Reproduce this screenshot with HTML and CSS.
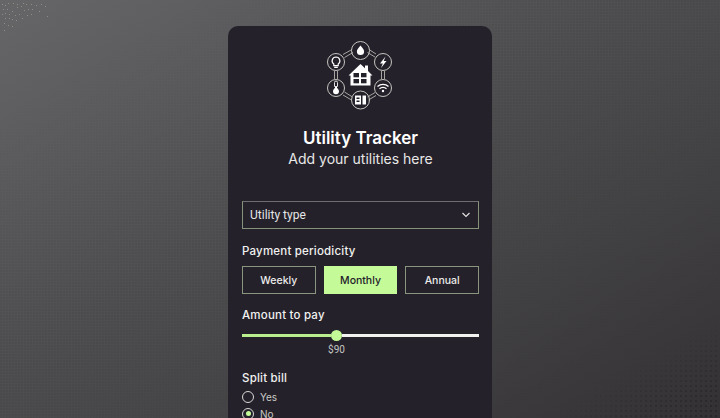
FILE: index.html
```html
<!DOCTYPE html>
<html lang="en">
<head>
<meta charset="utf-8">
<title>Utility Tracker</title>
<link rel="stylesheet" href="styles.css">
</head>
<body>
<svg class="sparkle" width="50" height="34" viewBox="0 0 50 34" aria-hidden="true">
  <path fill="#8f8e84" d="M2 4h1v1H2zM5 5h1v1H5zM8 3h1v1H8zM13 3h1v1h-1zM17 4h1v1h-1zM23 3h1v1h-1zM26 4h1v1h-1zM31 4h1v1h-1zM36 5h1v1h-1zM41 4h1v1h-1zM45 6h1v1h-1zM3 9h1v1H3zM7 9h1v1H7zM12 11h1v1h-1zM17 7h1v1h-1zM21 6h1v1h-1zM24 10h1v1h-1zM28 9h1v1h-1zM32 9h1v1h-1zM39 11h1v1h-1zM2 14h1v1H2zM5 13h1v1H5zM9 14h1v1H9zM15 15h1v1h-1zM19 14h1v1h-1zM27 15h1v1h-1zM31 14h1v1h-1zM47 16h1v1h-1zM5 18h1v1H5zM9 18h1v1H9zM12 19h1v1h-1zM16 20h1v1h-1zM22 18h1v1h-1zM4 23h1v1H4zM8 25h1v1H8zM12 26h1v1h-1zM4 30h1v1H4z"/>
</svg>
<main class="card">
  <svg class="logo" width="66" height="70" viewBox="0 0 66 70" aria-hidden="true">
    <g fill="none" stroke="#a5a5a0" stroke-width="1">
      <path d="M17 14.500 26 9.500M18.500 17.500 27 12.500M43 9.500 50 14M41.500 12.500 49 17"/>
      <path d="M8.500 31V39M11.500 31V39M55.500 31V39M58.500 31V39"/>
      <path d="M17 55 25.500 60M18.500 52 26.500 57M42.500 60 50 55.500M41.500 57 49 52.500"/>
    </g>
    <g fill="none" stroke="#c4c4be" stroke-width="1">
      <circle cx="34.500" cy="10.500" r="9"/>
      <circle cx="57" cy="22" r="8.500"/>
      <circle cx="57" cy="48" r="8.500"/>
      <circle cx="34.500" cy="60" r="9"/>
      <circle cx="10" cy="48" r="8.500"/>
      <circle cx="10" cy="22" r="8.500"/>
    </g>
    <g fill="#fff">
      <path d="M34.500 5.500c2 2.500 3.600 4 3.600 6a3.600 3.600 0 0 1-7.200 0c0-2 1.600-3.500 3.600-6z"/>
      <path d="M59.500 16.500 54 23.500h2.800L55 28l5.500-7h-2.800z"/>
      <path d="M22.500 35.500 34.500 24l4.500 4.200V25.500h3v5.500l4.500 4.500H44.500V45.500h-20V35.500z"/>
      <path d="M29 55.500h6v9h-6z"/>
      <path d="M36.500 55.500h3.500v9h-3.500z"/>
      <path d="M9 46.500h2v1.500c1.400 1 2 2.300 2 3.300a3 3 0 0 1-6 0c0-1 .6-2.300 2-3.300z"/>
    </g>
    <path d="M8.500 42.500a1.500 1.500 0 0 1 3 0v4h-3z" fill="none" stroke="#e0e0dc" stroke-width="1"/>
    <g fill="#24212a">
      <rect x="27.500" y="33" width="5.500" height="4.300"/>
      <rect x="35" y="33" width="5.500" height="4.300"/>
      <rect x="27.500" y="39" width="5.500" height="4.300"/>
      <rect x="35" y="39" width="5.500" height="4.300"/>
      <rect x="30.500" y="57.500" width="3" height="1.500"/>
      <rect x="30.500" y="60.500" width="3" height="1.500"/>
    </g>
    <g fill="none" stroke="#fff" stroke-width="1.200">
      <path d="M10 17a3.900 3.900 0 0 1 2.200 7.100v1.600H7.800v-1.600A3.900 3.900 0 0 1 10 17zM8.200 27.300h3.600"/>
      <path d="M51.500 46.500a8 8 0 0 1 11 0M53.500 48.800a5 5 0 0 1 7 0"/>
    </g>
    <circle cx="57" cy="51" r="1.200" fill="#fff"/>
  </svg>
  <h1 class="title">Utility Tracker</h1>
  <p class="subtitle">Add your utilities here</p>

  <div class="select">
    <span>Utility type</span>
    <svg width="10" height="6" viewBox="0 0 10 6" aria-hidden="true"><path d="M1.500 1l3.500 3.500L8.500 1" fill="none" stroke="#e6e6e6" stroke-width="1.100"/></svg>
  </div>

  <h2 class="label label-period">Payment periodicity</h2>
  <div class="periods">
    <div class="period">Weekly</div>
    <div class="period active">Monthly</div>
    <div class="period">Annual</div>
  </div>

  <h2 class="label label-amount">Amount to pay</h2>
  <div class="slider">
    <div class="slider-fill"></div>
    <div class="slider-thumb"></div>
    <div class="slider-rest"></div>
  </div>
  <div class="slider-value"><span>$90</span></div>

  <h2 class="label label-split">Split bill</h2>
  <div class="radio"><span class="dot"></span>Yes</div>
  <div class="radio"><span class="dot on"></span>No</div>
</main>
</body>
</html>
```
FILE: styles.css
```css
* { box-sizing: border-box; }
html, body { margin: 0; height: 418px; overflow: hidden; }
body {
  position: relative;
  background: linear-gradient(to bottom right, #666567 0%, #4c4b4d 50%, #333134 100%);
  font-family: "Inter", "Open Sans", sans-serif;
  color: #fff;
  display: flex;
  justify-content: center;
  align-items: flex-start;
  padding-top: 26px;
}
body::before,
body::after {
  content: "";
  position: absolute;
  inset: 0;
  pointer-events: none;
}
body::before {
  background-size: 3px 3px;
  background-image: radial-gradient(circle at 1px 1px, rgba(60, 58, 62, .16) 1px, transparent 1px);
  -webkit-mask-image: linear-gradient(to bottom right, transparent 14%, #000 45%, transparent 85%);
  mask-image: linear-gradient(to bottom right, transparent 14%, #000 45%, transparent 85%);
}
body::after {
  background-size: 5px 5px;
  background-image: radial-gradient(circle at 1px 1px, rgba(34, 32, 36, .6) 1px, transparent 1px);
  -webkit-mask-image: linear-gradient(to bottom right, transparent 88%, #000 99%);
  mask-image: linear-gradient(to bottom right, transparent 88%, #000 99%);
}
.sparkle { position: absolute; top: 0; left: 0; z-index: 1; }
.card {
  position: relative;
  z-index: 1;
  width: 264px;
  flex: none;
  background: #24212a;
  border-radius: 10px 10px 0 0;
  padding: 14px 13px 20px 14px;
  display: flex;
  flex-direction: column;
}
.logo { display: block; margin-left: 84px; flex: none; }
.title { margin: 17px 0 0; font-size: 17px; line-height: 22px; font-weight: 600; text-align: center; letter-spacing: 0; }
.subtitle { margin: 0; font-size: 14px; line-height: 19px; font-weight: 400; text-align: center; color: #e8e8e6; letter-spacing: 0; }
.select {
  margin-top: 33px;
  height: 28px;
  border: 1px solid #84937a;
  border-top-color: #6f6e70;
  padding: 0 7px;
  display: flex;
  align-items: center;
  justify-content: space-between;
  font-size: 12px;
  font-family: "Roboto", sans-serif;
  color: #e6e6e6;
}
.label { margin: 0; font-size: 11.500px; line-height: 16px; font-weight: 500; color: #f1f1f0; letter-spacing: .2px; }
.label-period { margin-top: 14px; }
.periods { margin-top: 7px; display: flex; gap: 8px; }
.period {
  flex: 1;
  height: 28px;
  border: 1px solid #8a9580;
  display: flex;
  align-items: center;
  justify-content: center;
  font-size: 10.500px;
  font-weight: 500;
  color: #ececea;
}
.period.active { background: #c4fb98; border-color: #c4fb98; color: #24212a; }
.label-amount { margin-top: 13px; }
.slider { margin-top: 7px; height: 11px; display: flex; align-items: center; }
.slider-fill { width: 89px; height: 3px; background: #b9ef8f; }
.slider-thumb { width: 11px; height: 11px; border-radius: 50%; background: #c4fb98; flex: none; }
.slider-rest { flex: 1; height: 3px; background: #f1f1f0; }
.slider-value { margin-top: 2px; width: 189px; text-align: center; font-size: 10px; line-height: 13px; color: #c4c4c4; font-family: "Roboto", sans-serif; }
.label-split { margin-top: 14px; }
.radio { display: flex; align-items: center; gap: 6px; height: 17px; font-size: 10px; color: #c9c9c6; }
.label-split + .radio { margin-top: 2px; }
.dot { width: 12px; height: 12px; border: 1px solid #d8d8d6; border-radius: 50%; display: flex; align-items: center; justify-content: center; flex: none; }
.dot.on::after { content: ""; width: 5px; height: 5px; border-radius: 50%; background: #c4fb98; }
```
